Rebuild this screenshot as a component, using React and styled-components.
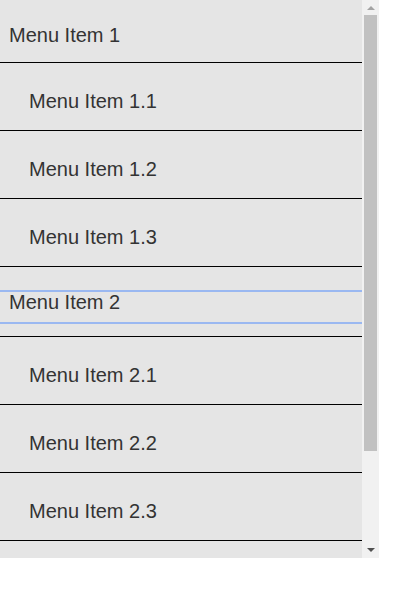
import React from "react";
import styled, { createGlobalStyle } from "styled-components";

const Global = createGlobalStyle`
  html, body { margin: 0; padding: 0; background: #ffffff; }
  body { font-family: "Liberation Sans", Arial, sans-serif; }
`;

const Frame = styled.div`
  display: flex;
  width: 379px;
  height: 558px;
`;

const MenuPane = styled.nav`
  flex: 1;
  min-width: 0;
  overflow: hidden;
  background: #e5e5e5;
  color: #333333;
  font-size: 20px;
`;

const ScrollBar = styled.div`
  width: 17px;
  flex: none;
  display: flex;
  flex-direction: column;
  background: #f1f1f1;
`;

const ArrowButton = styled.div`
  height: 15px;
  flex: none;
  display: flex;
  align-items: center;
  justify-content: center;
  padding-bottom: ${(p) => (p.$down ? "2px" : "0")};
  box-sizing: border-box;
`;

const Track = styled.div`
  flex: 1;
  padding: 0 2px;
`;

const Thumb = styled.div`
  height: 436px;
  background: #c1c1c1;
`;

const List = styled.ul`
  list-style: none;
  margin: 0;
  padding: 0;
`;

const Section = styled.li`
  margin: 0;
  padding: 0;
`;

const Header = styled.div`
  padding: 25px 0 14px;
  border-bottom: 1px solid #000000;
  ${Section}:first-child & {
    padding-bottom: 7px;
  }
`;

const HeaderLabel = styled.a`
  display: block;
  line-height: 21px;
  padding: 0 9px 9px;
  color: inherit;
  text-decoration: none;
  outline: ${(p) => (p.$focused ? "2px solid #9ab8f1" : "none")};
`;

const SubList = styled.ul`
  list-style: none;
  margin: 0;
  padding: 0;
`;

const SubItem = styled.li`
  line-height: 23px;
  padding: 27px 0 17px 29px;
  border-bottom: 1px solid #000000;
`;

const Arrow = ({ up, color }) => (
  <svg width="8" height="4" viewBox="0 0 8 4" aria-hidden="true">
    <polygon points={up ? "0,4 8,4 4,0" : "0,0 8,0 4,4"} fill={color} />
  </svg>
);

const menu = [
  { label: "Menu Item 1", children: ["Menu Item 1.1", "Menu Item 1.2", "Menu Item 1.3"] },
  { label: "Menu Item 2", focused: true, children: ["Menu Item 2.1", "Menu Item 2.2", "Menu Item 2.3"] },
];

export default function App() {
  return (
    <>
      <Global />
      <Frame>
        <MenuPane>
          <List>
            {menu.map((section) => (
              <Section key={section.label}>
                <Header>
                  <HeaderLabel $focused={section.focused}>{section.label}</HeaderLabel>
                </Header>
                <SubList>
                  {section.children.map((child) => (
                    <SubItem key={child}>{child}</SubItem>
                  ))}
                </SubList>
              </Section>
            ))}
          </List>
        </MenuPane>
        <ScrollBar>
          <ArrowButton>
            <Arrow up color="#a3a3a3" />
          </ArrowButton>
          <Track>
            <Thumb />
          </Track>
          <ArrowButton $down>
            <Arrow color="#505050" />
          </ArrowButton>
        </ScrollBar>
      </Frame>
    </>
  );
}
